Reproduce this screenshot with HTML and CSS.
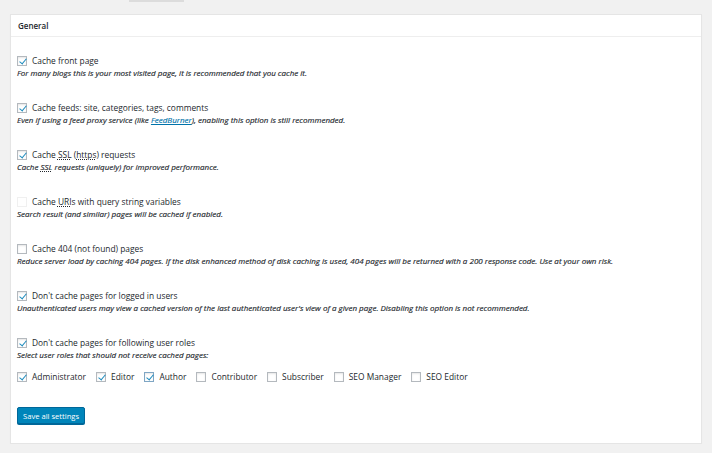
FILE: index.html
```html
<!DOCTYPE html>
<html lang="en">
<head>
    <meta charset="UTF-8">
    <title>Page Cache Settings</title>
    <link rel="stylesheet" href="styles.css">
</head>
<body>
    <div class="tab-edge"></div>

    <div class="postbox">
        <h3 class="hndle">General</h3>

        <div class="inside">
            <div class="option">
                <label><input type="checkbox" class="cb" checked><span>Cache front page</span></label>
                <p class="description">For many blogs this is your most visited page, it is recommended that you cache it.</p>
            </div>

            <div class="option">
                <label><input type="checkbox" class="cb" checked><span>Cache feeds: site, categories, tags, comments</span></label>
                <p class="description">Even if using a feed proxy service (like <a href="#">FeedBurner</a>), enabling this option is still recommended.</p>
            </div>

            <div class="option">
                <label><input type="checkbox" class="cb" checked><span>Cache <abbr>SSL</abbr> (<abbr>https</abbr>) requests</span></label>
                <p class="description">Cache <abbr>SSL</abbr> requests (uniquely) for improved performance.</p>
            </div>

            <div class="option">
                <label><input type="checkbox" class="cb" disabled><span>Cache <abbr>URI</abbr>s with query string variables</span></label>
                <p class="description">Search result (and similar) pages will be cached if enabled.</p>
            </div>

            <div class="option">
                <label><input type="checkbox" class="cb"><span>Cache 404 (not found) pages</span></label>
                <p class="description">Reduce server load by caching 404 pages. If the disk enhanced method of disk caching is used, 404 pages will be returned with a 200 response code. Use at your own risk.</p>
            </div>

            <div class="option">
                <label><input type="checkbox" class="cb" checked><span>Don't cache pages for logged in users</span></label>
                <p class="description">Unauthenticated users may view a cached version of the last authenticated user's view of a given page. Disabling this option is not recommended.</p>
            </div>

            <div class="option last">
                <label><input type="checkbox" class="cb" checked><span>Don't cache pages for following user roles</span></label>
                <p class="description">Select user roles that should not receive cached pages:</p>
            </div>

            <div class="roles">
                <label><input type="checkbox" class="cb" checked><span>Administrator</span></label>
                <label><input type="checkbox" class="cb" checked><span>Editor</span></label>
                <label><input type="checkbox" class="cb focus" checked><span>Author</span></label>
                <label><input type="checkbox" class="cb"><span>Contributor</span></label>
                <label><input type="checkbox" class="cb"><span>Subscriber</span></label>
                <label><input type="checkbox" class="cb"><span>SEO Manager</span></label>
                <label><input type="checkbox" class="cb"><span>SEO Editor</span></label>
            </div>

            <button type="submit" class="button-primary">Save all settings</button>
        </div>
    </div>
</body>
</html>
```

FILE: styles.css
```css
* {
    margin: 0;
    padding: 0;
    box-sizing: border-box;
}

body {
    background-color: #f1f1f1;
    font-family: "Open Sans", "Noto Sans", sans-serif;
    color: #23282d;
    padding: 0 10px;
}

.tab-edge {
    width: 55px;
    height: 2px;
    margin-left: 119px;
    background-color: #dcdcdc;
    margin-bottom: 12px;
}

.postbox {
    background-color: white;
    border: 1px solid #e5e5e5;
    box-shadow: 0 1px 1px rgba(0,0,0,0.04);
    height: 430px;
    width: 692px;
}

.hndle {
    font-size: 8px;
    font-weight: 600;
    line-height: 21px;
    padding: 0 7px;
    border-bottom: 1px solid #eee;
}

.inside {
    padding: 18px 6px 0 6px;
}

.option {
    margin-bottom: 23px;
}

.option.last {
    margin-bottom: 10px;
}

label {
    display: flex;
    align-items: center;
    font-size: 8.4px;
    line-height: 12px;
}

.cb {
    appearance: none;
    -webkit-appearance: none;
    width: 10px;
    height: 10px;
    border: 1px solid #b4b9be;
    background-color: white;
    box-shadow: inset 0 1px 2px rgba(0,0,0,0.1);
    margin-right: 5px;
    flex-shrink: 0;
    position: relative;
}

.cb:checked::before {
    content: "";
    position: absolute;
    left: 2.5px;
    top: 0px;
    width: 3px;
    height: 6px;
    border: solid #1e8cbe;
    border-width: 0 1.6px 1.6px 0;
    transform: rotate(40deg);
}

.cb:disabled {
    border-color: #f0f0f0;
    box-shadow: none;
}

.cb.focus {
    border-color: #7fa6c4;
}

.description {
    font-size: 8px;
    font-style: italic;
    line-height: 12px;
    -webkit-text-stroke: 0.15px #23282d;
}

.description a {
    color: #0073aa;
    -webkit-text-stroke: 0.15px #0073aa;
}

abbr {
    text-decoration: underline dotted;
}

.roles {
    display: flex;
    margin-bottom: 24px;
}

.roles label {
    margin-right: 10px;
}

.button-primary {
    display: block;
    background-color: #0085ba;
    border: 1px solid #006799;
    border-radius: 2px;
    box-shadow: 0 1px 0 #006799;
    color: white;
    font-family: "Open Sans", sans-serif;
    font-size: 7.6px;
    height: 17px;
    padding: 0 5px;
    cursor: pointer;
}
```
